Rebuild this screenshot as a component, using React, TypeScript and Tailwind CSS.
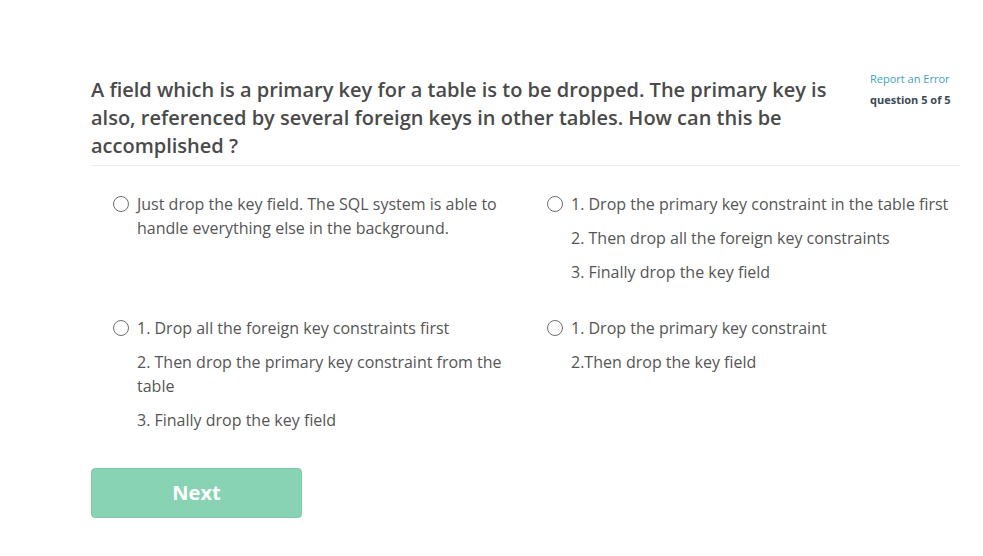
import React from "react";

const options: string[][] = [
  ["Just drop the key field. The SQL system is able to handle everything else in the background."],
  [
    "1. Drop the primary key constraint in the table first",
    "2. Then drop all the foreign key constraints",
    "3. Finally drop the key field",
  ],
  [
    "1. Drop all the foreign key constraints first",
    "2. Then drop the primary key constraint from the table",
    "3. Finally drop the key field",
  ],
  ["1. Drop the primary key constraint", "2.Then drop the key field"],
];

function Option({ lines, left }: { lines: string[]; left: boolean }) {
  return (
    <label className={`flex items-start gap-2 cursor-pointer ${left ? "pr-5" : "pr-0"}`}>
      <span className="mt-1 h-[16px] w-[16px] shrink-0 rounded-full border border-[#6f6f6f] bg-white" />
      <div className="flex flex-col gap-[10px]">
        {lines.map((line, i) => (
          <p key={i} className="text-[16px] leading-6 text-[#555555]">
            {line}
          </p>
        ))}
      </div>
    </label>
  );
}

export default function App() {
  return (
    <div
      className="min-h-screen bg-white pt-[72px] pl-[91px]"
      style={{ fontFamily: '"Open Sans", "Liberation Sans", sans-serif' }}
    >
      <div className="w-[869px]">
        <div className="flex items-start gap-[19px] border-b border-[#ececec] pb-[5px]">
          <h1 className="w-[760px] pt-1 text-[20px] font-semibold leading-7 text-[#4a4a4a]">
            A field which is a primary key for a table is to be dropped. The primary key is
            also, referenced by several foreign keys in other tables. How can this be
            accomplished ?
          </h1>
          <div className="flex-1 text-[11px] leading-[14px]">
            <a href="#" className="block text-[#3f9fc0]">
              Report an Error
            </a>
            <p className="mt-[7px] font-bold text-[#3a4a55]">question 5 of 5</p>
          </div>
        </div>

        <div className="grid grid-cols-[434px_1fr] gap-y-8 pl-[22px] pt-[26px]">
          {options.map((lines, i) => (
            <Option key={i} lines={lines} left={i % 2 === 0} />
          ))}
        </div>

        <button className="mt-9 h-[50px] w-[211px] rounded-[4px] border border-[#7fcaab] bg-[#88d3b3] text-[20px] font-bold text-white">
          Next
        </button>
      </div>
    </div>
  );
}
